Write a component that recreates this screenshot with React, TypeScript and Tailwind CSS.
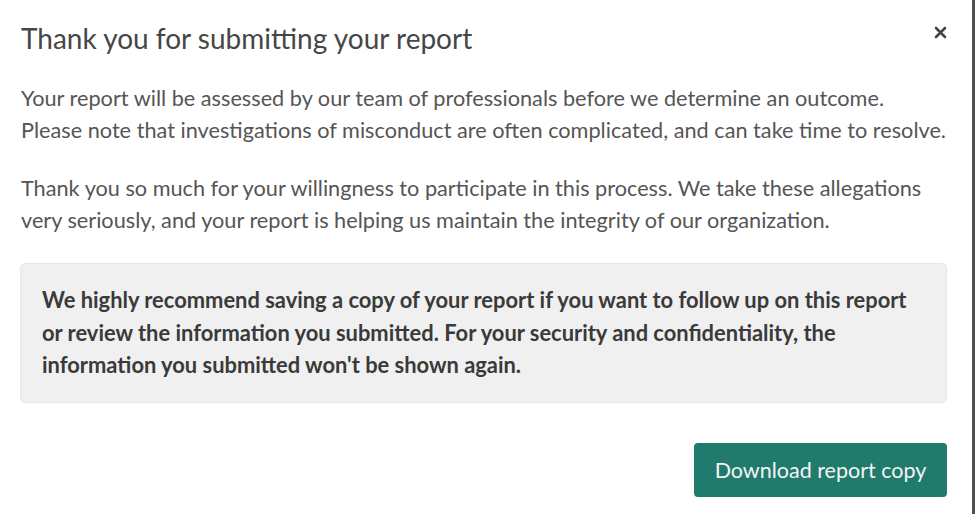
import React from "react";

export default function App() {
  return (
    <div className="w-[975px] h-[514px] flex bg-white overflow-hidden" style={{ fontFamily: "Lato, 'Open Sans', sans-serif" }}>
      <div className="flex-1 flex flex-col pl-[20px] pr-[25px]">
        <div className="flex items-start justify-between pt-[20px]">
          <h1 className="ml-[1px] text-[28px] leading-[36px] text-[#464646] font-normal">Thank you for submitting your report</h1>
          <button className="mt-[3px] mr-[-2px] text-[#444] w-[18px] h-[18px] flex items-center justify-center" aria-label="Close">
            <svg width="13" height="13" viewBox="0 0 13 13">
              <path d="M2 2 L11 11 M11 2 L2 11" stroke="#444" strokeWidth="2.6" strokeLinecap="round" />
            </svg>
          </button>
        </div>
        <div className="mt-[26px] ml-[1px] text-[21.7px] leading-[32px] text-[#555]">
          <p>Your report will be assessed by our team of professionals before we determine an outcome.<br />Please note that investigations of misconduct are often complicated, and can take time to resolve.</p>
          <p className="mt-[26px]">Thank you so much for your willingness to participate in this process. We take these allegations<br />very seriously, and your report is helping us maintain the integrity of our organization.</p>
        </div>
        <div className="mt-[27px] rounded-[5px] bg-[#f0f0f0] border border-[#e6e6e6] pl-[21px] pr-[20px] pt-[20px] pb-[20px] text-[21.9px] leading-[32.5px] font-bold text-[#3a3a3a]">
          We highly recommend saving a copy of your report if you want to follow up on this report<br />or review the information you submitted. For your security and confidentiality, the<br />information you submitted won't be shown again.
        </div>
        <div className="flex justify-end mt-[40px]">
          <button className="w-[253px] h-[54px] rounded-[4px] bg-[#217b6c] text-[#f4f4f4] text-[21.5px] pt-[1px]">Download report copy</button>
        </div>
      </div>
      <div className="w-[3px] bg-[#505050]" />
    </div>
  );
}
